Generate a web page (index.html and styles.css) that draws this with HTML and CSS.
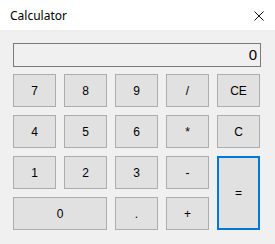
FILE: index.html
```html
<!DOCTYPE html>
<html lang="en">
<head>
    <meta charset="UTF-8">
    <meta name="viewport" content="width=device-width, initial-scale=1.0">
    <title>Calculator</title>
    <link rel="stylesheet" href="styles.css">
</head>
<body>
    <div class="window">
        <div class="titlebar">
            <span class="title">Calculator</span>
            <svg class="close" width="10" height="10" viewBox="0 0 10 10">
                <path d="M0.5 0.5 L9.5 9.5 M9.5 0.5 L0.5 9.5" stroke="#111" stroke-width="1" fill="none"/>
            </svg>
        </div>
        <div class="content">
            <div class="display">0</div>
            <div class="keys">
                <button class="key">7</button>
                <button class="key">8</button>
                <button class="key">9</button>
                <button class="key">/</button>
                <button class="key">CE</button>
                <button class="key">4</button>
                <button class="key">5</button>
                <button class="key">6</button>
                <button class="key">*</button>
                <button class="key">C</button>
                <button class="key">1</button>
                <button class="key">2</button>
                <button class="key">3</button>
                <button class="key">-</button>
                <button class="key equals">=</button>
                <button class="key zero">0</button>
                <button class="key">.</button>
                <button class="key">+</button>
            </div>
        </div>
    </div>
</body>
</html>
```

FILE: styles.css
```css
body {
    margin: 0;
    font-family: "Liberation Sans", Arial, sans-serif;
    background-color: #f0f0f0;
}
.window {
    width: 275px;
    height: 244px;
    background-color: #f0f0f0;
}
.titlebar {
    height: 30px;
    background-color: white;
    display: flex;
    align-items: center;
    justify-content: space-between;
    padding: 0 11px 0 10px;
    box-sizing: border-box;
}
.title {
    font-family: "Noto Sans", "Open Sans", sans-serif;
    font-size: 12px;
    color: #000;
    margin-top: 1px;
}
.close {
    display: block;
    margin-top: 1px;
}
.content {
    padding: 13px 0 0 13px;
}
.display {
    width: 248px;
    height: 24px;
    box-sizing: border-box;
    border: 1px solid #7a7a7a;
    background-color: #f0f0f0;
    text-align: right;
    font-size: 15px;
    line-height: 22px;
    padding-right: 3px;
    margin-bottom: 7px;
}
.keys {
    display: grid;
    grid-template-columns: repeat(5, 43px);
    grid-auto-rows: 33px;
    column-gap: 8px;
    row-gap: 8px;
}
.key {
    background-color: #e1e1e1;
    border: 1px solid #adadad;
    font-family: "Liberation Sans", Arial, sans-serif;
    font-size: 12px;
    color: #000;
    padding: 0;
    margin: 0;
}
.key.zero {
    grid-column: span 2;
}
.key.equals {
    grid-row: span 2;
    border: 2px solid #0078d7;
}
```
